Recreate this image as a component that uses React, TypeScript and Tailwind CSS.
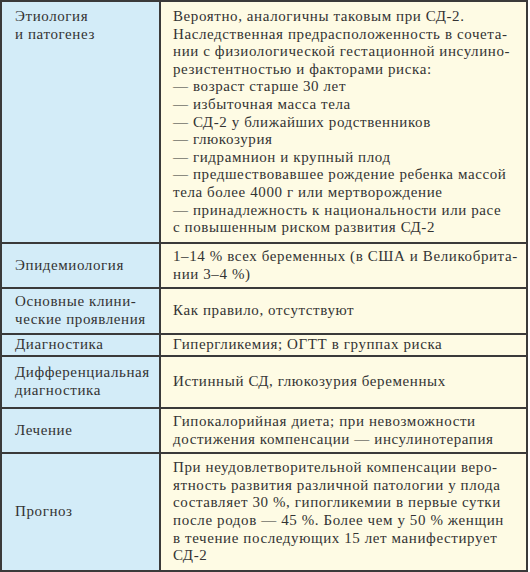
import React from "react";

type Row = { label: React.ReactNode; h: string; content: React.ReactNode; top?: boolean };

const rows: Row[] = [
  {
    label: (
      <>
        Этиология
        <br />и патогенез
      </>
    ),
    h: "h-[242px]",
    top: true,
    content: (
      <>
        Вероятно, аналогичны таковым при СД-2.
        <br />
        Наследственная предрасположенность в сочета-
        <br />
        нии с физиологической гестационной инсулино-
        <br />
        резистентностью и факторами риска:
        <br />— возраст старше 30 лет
        <br />— избыточная масса тела
        <br />— СД-2 у ближайших родственников
        <br />— глюкозурия
        <br />— гидрамнион и крупный плод
        <br />— предшествовавшее рождение ребенка массой
        <br />
        тела более 4000 г или мертворождение
        <br />— принадлежность к национальности или расе
        <br />с повышенным риском развития СД-2
      </>
    ),
  },
  {
    label: "Эпидемиология",
    h: "h-[45px]",
    content: (
      <>
        1–14 % всех беременных (в США и Великобрита-
        <br />
        нии 3–4 %)
      </>
    ),
  },
  {
    label: (
      <>
        Основные клини-
        <br />
        ческие проявления
      </>
    ),
    h: "h-[46px]",
    content: "Как правило, отсутствуют",
  },
  {
    label: "Диагностика",
    h: "h-[22px]",
    content: "Гипергликемия; ОГТТ в группах риска",
  },
  {
    label: (
      <>
        Дифференциальная
        <br />
        диагностика
      </>
    ),
    h: "h-[52px]",
    content: "Истинный СД, глюкозурия беременных",
  },
  {
    label: "Лечение",
    h: "h-[45px]",
    content: (
      <>
        Гипокалорийная диета; при невозможности
        <br />
        достижения компенсации — инсулинотерапия
      </>
    ),
  },
  {
    label: "Прогноз",
    h: "h-[116px]",
    content: (
      <>
        При неудовлетворительной компенсации веро-
        <br />
        ятность развития различной патологии у плода
        <br />
        составляет 30 %, гипогликемии в первые сутки
        <br />
        после родов — 45 %. Более чем у 50 % женщин
        <br />в течение последующих 15 лет манифестирует
        <br />
        СД-2
      </>
    ),
  },
];

const txt =
  "font-['Liberation_Serif',serif] text-[15px] leading-[17.6px] tracking-[0.6px] text-[#333333]";

export default function App() {
  return (
    <div className="w-[530px] h-[572px] bg-white font-['Liberation_Serif',serif]">
      <div className="w-[528px] border-2 border-[#3a3a3a]">
        {rows.map((r, i) => (
          <div
            key={i}
            className={`grid grid-cols-[159px_1fr] ${r.h} ${i < rows.length - 1 ? "border-b-2 border-[#3a3a3a]" : ""}`}
          >
            <div
              className={`bg-[#d3ecf8] border-r-2 border-[#3a3a3a] pl-[13px] flex ${r.top ? "items-start pt-[6px]" : "items-center"}`}
            >
              <div className={txt}>{r.label}</div>
            </div>
            <div className={`bg-[#fefbe4] pl-[12px] flex ${r.top ? "items-start pt-[6px]" : "items-center"}`}>
              <div className={txt}>{r.content}</div>
            </div>
          </div>
        ))}
      </div>
    </div>
  );
}
